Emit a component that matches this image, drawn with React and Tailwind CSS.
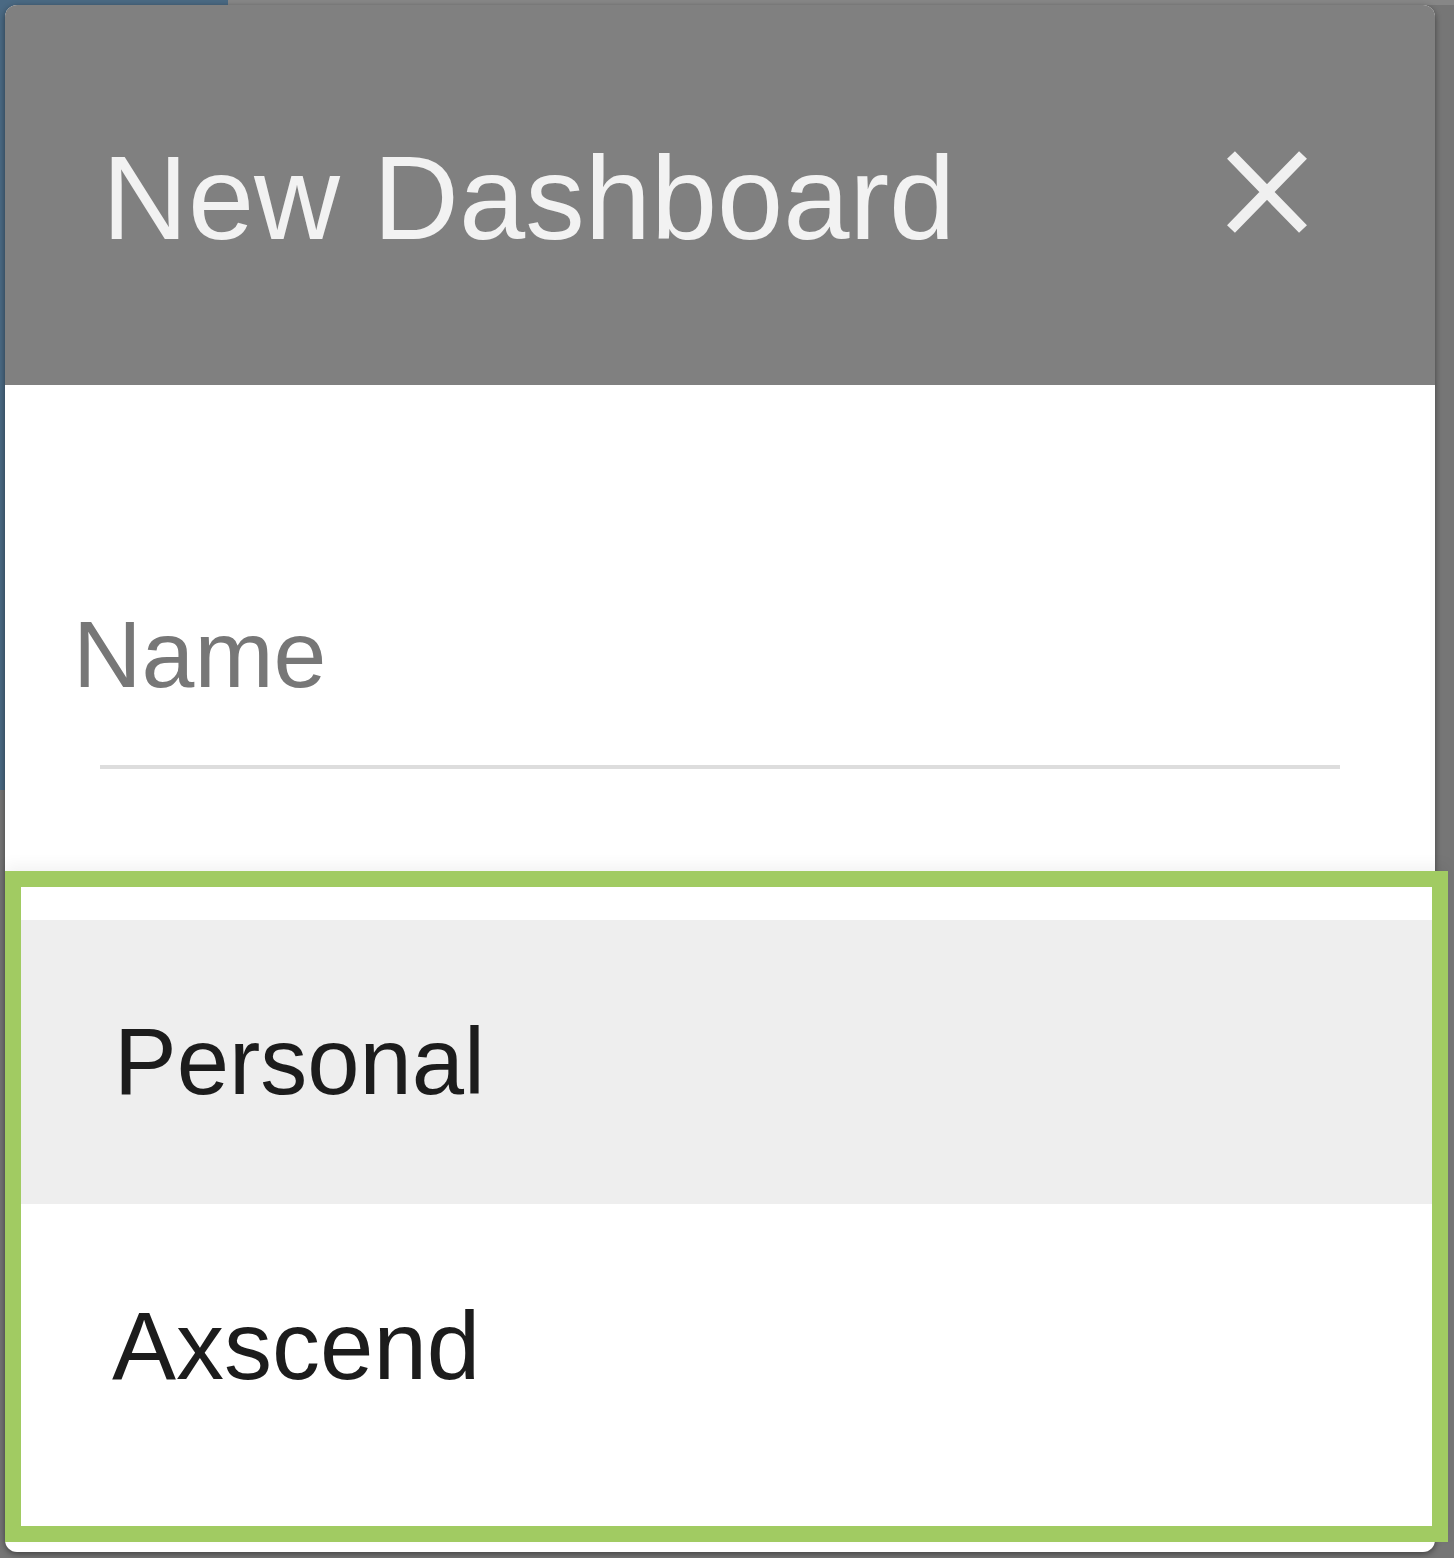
export default function App() {
  return (
    <div
      className="relative w-[1454px] h-[1558px] bg-[#767676] overflow-hidden pt-[5px] pl-[5px]"
      style={{ fontFamily: '"Liberation Sans", Arial, sans-serif' }}
    >
      <div className="absolute left-0 top-0 w-[228px] h-[790px] bg-[#4a6983]" />
      <div className="absolute left-[228px] top-0 right-0 h-[5px] bg-[#878787]" />
      <div className="relative w-[1430px] h-[1547px] rounded-[12px] bg-white overflow-visible shadow-[0_2px_6px_rgba(0,0,0,0.45)]">
        <div className="h-[380px] bg-[#808080] rounded-t-[12px] flex justify-between items-start pt-[133px] pl-[97px] pr-[127px]">
          <h1 className="text-[119px] leading-none text-[#f2f2f2] font-normal">New Dashboard</h1>
          <svg className="mt-[12px]" width="82" height="84" viewBox="0 0 82 84">
            <path d="M5 5 L77 79 M77 5 L5 79" stroke="#f0f0f0" strokeWidth="11" strokeLinecap="butt" />
          </svg>
        </div>
        <div className="pt-[222px] pl-[68px]">
          <div className="text-[95px] leading-none text-[#777777]">Name</div>
          <div className="ml-[27px] mt-[63px] w-[1240px] h-[4px] bg-[#dddddd]" />
        </div>
        <div className="absolute left-0 top-[866px] w-[1443px] h-[671px] border-[16px] border-[#a1cb62] bg-white pt-[33px] shadow-[0_-6px_14px_rgba(0,0,0,0.05)]">
          <div className="h-[284px] bg-[#eeeeee] flex items-center pl-[93px] text-[94px] leading-none text-[#1c1c1c]">
            Personal
          </div>
          <div className="h-[284px] flex items-center pl-[91px] text-[96px] leading-none text-[#1c1c1c]">
            Axscend
          </div>
        </div>
      </div>
    </div>
  );
}
